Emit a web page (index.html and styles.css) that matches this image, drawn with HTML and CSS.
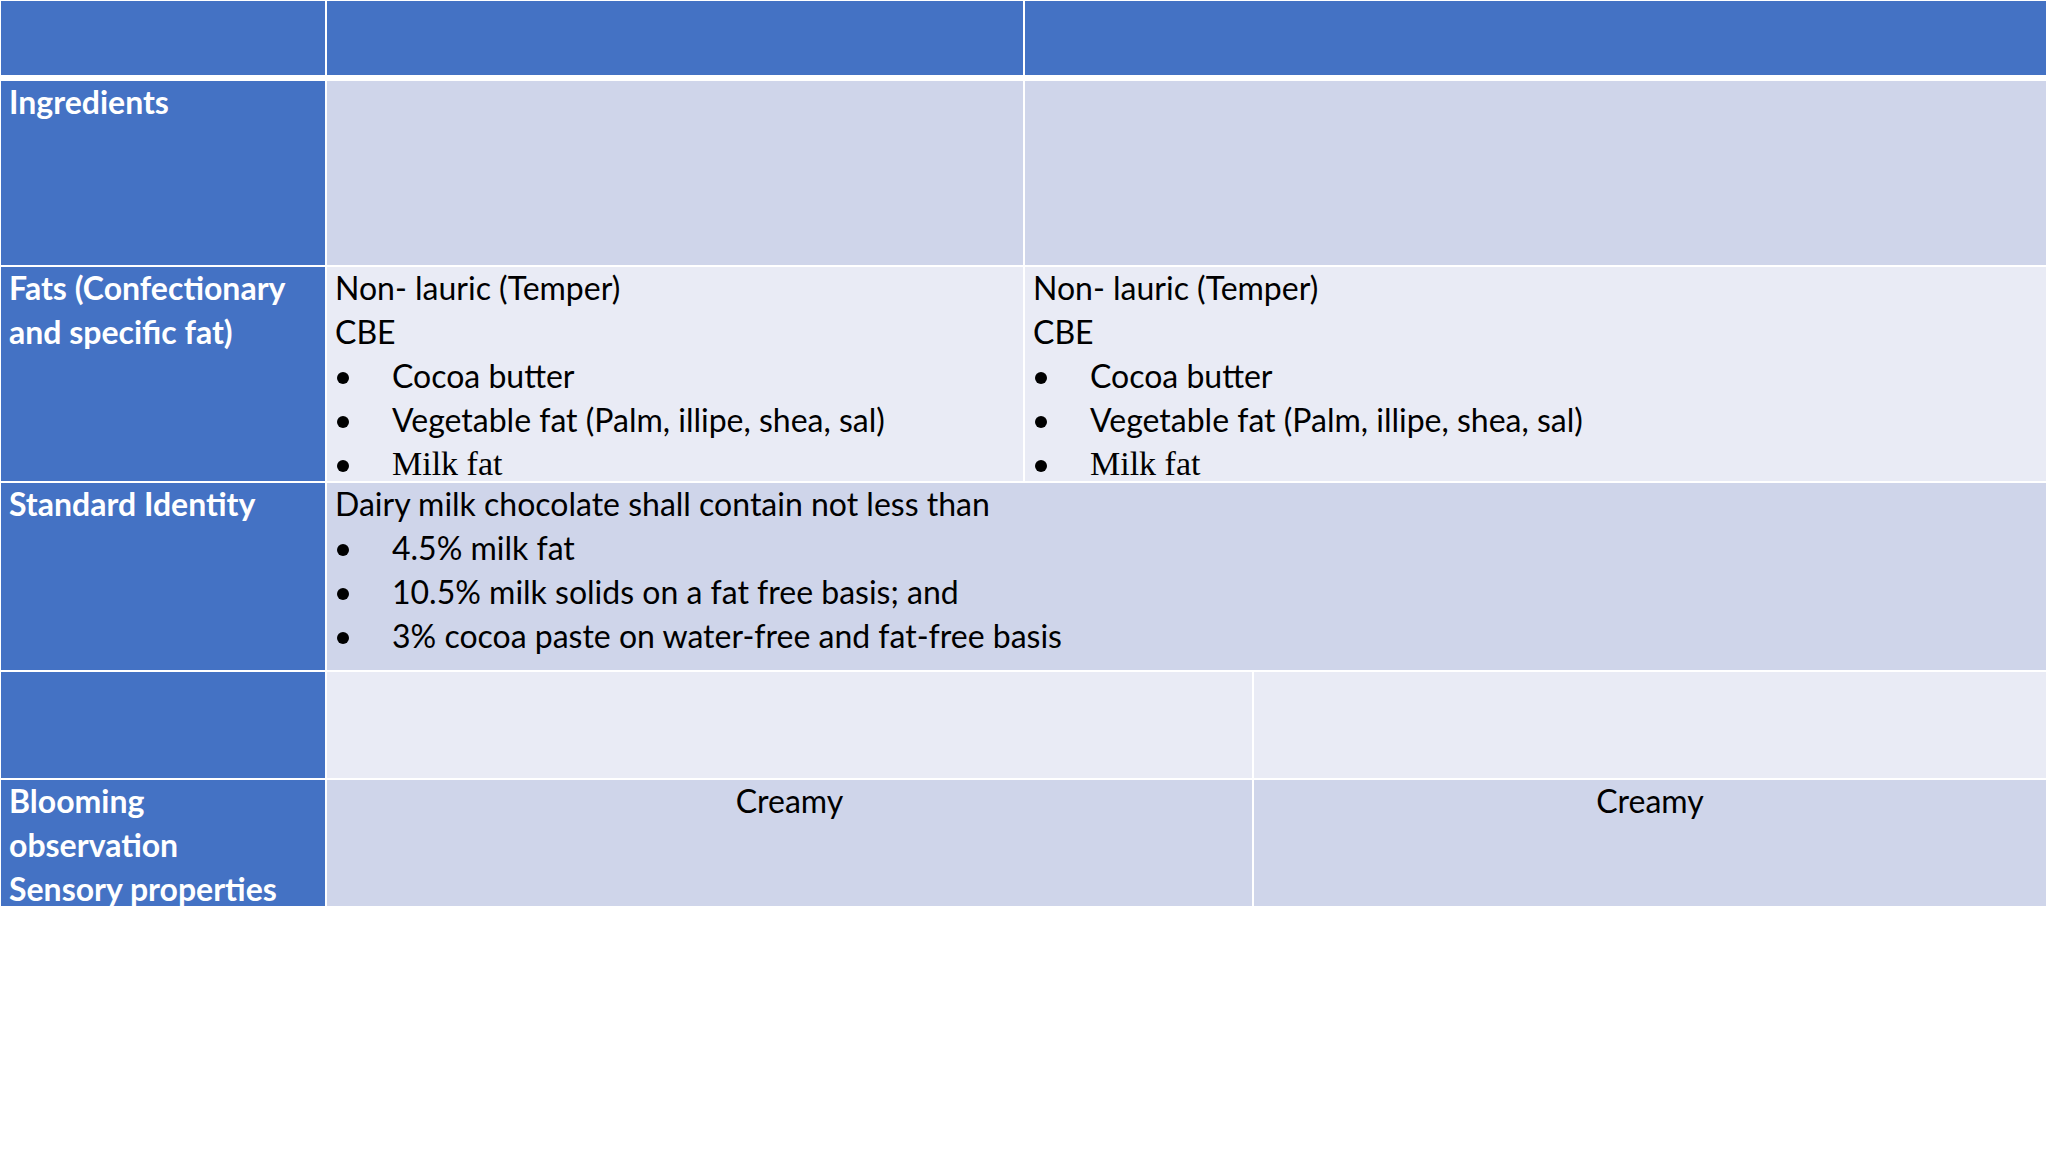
FILE: index.html
```html
<!DOCTYPE html>
<html lang="en">
<head>
<meta charset="utf-8">
<title>Dairy milk chocolate comparison</title>
<link rel="stylesheet" href="styles.css">
</head>
<body>
<div class="table">
  <div class="row head">
    <div class="c blue"></div>
    <div class="c blue"></div>
    <div class="c blue"></div>
  </div>
  <div class="row r-ing">
    <div class="c blue label"><div class="ln">Ingredients</div></div>
    <div class="c dark"></div>
    <div class="c dark"></div>
  </div>
  <div class="row r-fat">
    <div class="c blue label"><div class="ln">Fats (Confectionary</div><div class="ln">and specific fat)</div></div>
    <div class="c light">
      <div class="ln">Non- lauric (Temper)</div>
      <div class="ln">CBE</div>
      <div class="li">Cocoa butter</div>
      <div class="li">Vegetable fat (Palm, illipe, shea, sal)</div>
      <div class="li"><span class="serif">Milk fat</span></div>
    </div>
    <div class="c light">
      <div class="ln">Non- lauric (Temper)</div>
      <div class="ln">CBE</div>
      <div class="li">Cocoa butter</div>
      <div class="li">Vegetable fat (Palm, illipe, shea, sal)</div>
      <div class="li"><span class="serif">Milk fat</span></div>
    </div>
  </div>
  <div class="row r-std">
    <div class="c blue label"><div class="ln">Standard Identity</div></div>
    <div class="c dark span2">
      <div class="ln">Dairy milk chocolate shall contain not less than</div>
      <div class="li">4.5% milk fat</div>
      <div class="li">10.5% milk solids on a fat free basis; and</div>
      <div class="li">3% cocoa paste on water-free and fat-free basis</div>
    </div>
  </div>
  <div class="row split r-blank">
    <div class="c blue"></div>
    <div class="c light"></div>
    <div class="c light"></div>
  </div>
  <div class="row split r-bloom">
    <div class="c blue label">
      <div class="ln">Blooming</div>
      <div class="ln">observation</div>
      <div class="ln">Sensory properties</div>
    </div>
    <div class="c dark center"><div class="ln">Creamy</div></div>
    <div class="c dark center"><div class="ln">Creamy</div></div>
  </div>
</div>
</body>
</html>
```
FILE: styles.css
```css
html, body {
  margin: 0;
  padding: 0;
  background: #ffffff;
}

body {
  font-family: Lato, "Liberation Sans", sans-serif;
  font-size: 32px;
  color: #000000;
}

.table {
  display: flex;
  flex-direction: column;
  gap: 2px;
  width: 2045px;
  margin: 1px 0 0 1px;
}

.row {
  display: grid;
  grid-template-columns: 324px 696px 1021px;
  grid-template-rows: minmax(0, 1fr);
  column-gap: 2px;
}

.row.split {
  grid-template-columns: 324px 925px 792px;
}

.head { height: 74px; margin-bottom: 4px; }
.r-ing { height: 184px; }
.r-fat { height: 214px; }
.r-std { height: 187px; }
.r-blank { height: 106px; }
.r-bloom { height: 126px; }

.c {
  padding: 0 8px;
  line-height: 42px;
  min-width: 0;
}

.span2 { grid-column: 2 / 4; }

.blue { background: #4472c4; }
.dark { background: #cfd5ea; }
.light { background: #e9ebf5; }

.label {
  color: #ffffff;
  font-weight: 700;
}

.center { text-align: center; }

.ln {
  height: 44px;
  white-space: nowrap;
}

.li {
  display: flex;
  align-items: flex-start;
  height: 44px;
  white-space: nowrap;
}

.li::before {
  content: "";
  flex: none;
  width: 12px;
  height: 12px;
  margin-top: 17px;
  margin-left: 2px;
  margin-right: 43px;
  border-radius: 50%;
  background: #000000;
}

.serif {
  font-family: "Liberation Serif", "Times New Roman", serif;
  font-size: 34px;
}
```
